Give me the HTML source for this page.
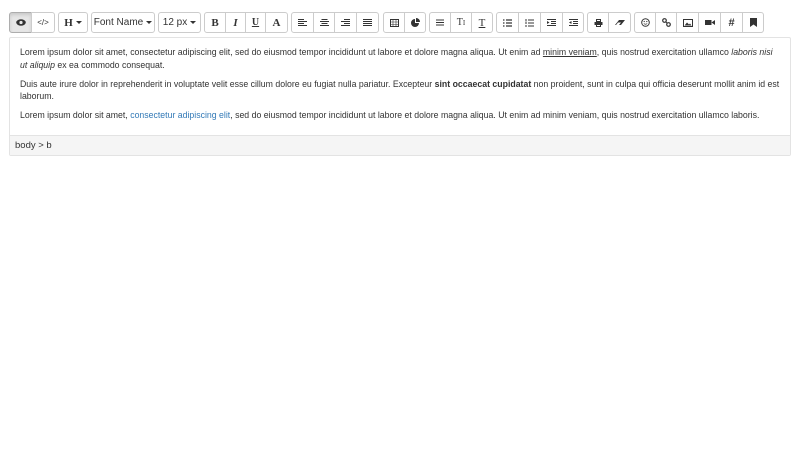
<!DOCTYPE html>
<html><head><meta charset="utf-8"><style>
*{box-sizing:border-box;margin:0;padding:0}
body{width:800px;height:450px;background:#fff;font-family:"Liberation Sans",sans-serif;color:#333;position:relative;overflow:hidden}
.b{position:absolute;top:12px;height:21px;border:1px solid #ccc;background:#fff;display:flex;align-items:center;justify-content:center;font-size:10px;color:#333}
.act{background:#e6e6e6;border-color:#adadad;box-shadow:inset 0 2px 3px rgba(0,0,0,.125)}
.car{display:inline-block;border-top:3px solid #333;border-left:3px solid transparent;border-right:3px solid transparent;margin-left:3px;vertical-align:middle}
svg{display:block}
.ed{position:absolute;left:9px;top:37px;width:782px;height:119px;border:1px solid #e3e3e3;border-radius:2px}
.txt{padding:8px 10px 0 10px;font-size:8.74px;line-height:12.8px}
.txt p{margin-bottom:6px}
.st{position:absolute;left:0;right:0;bottom:0;height:20px;background:#f5f5f5;border-top:1px solid #e3e3e3;font-size:9.5px;padding:4px 5px}
a{color:#337ab7;text-decoration:none}
</style></head><body>
<div class="b act" style="left:9px;width:23px;border-radius:3px 0 0 3px"><svg width="10" height="7" viewBox="0 0 10 7"><ellipse cx="5" cy="3.5" rx="4.8" ry="3.2" fill="#333"/><circle cx="5" cy="3.5" r="1.6" fill="#e6e6e6"/></svg></div>
<div class="b" style="left:31px;width:24px;border-radius:0 3px 3px 0;font-size:8px">&lt;/&gt;</div>
<div class="b" style="left:58px;width:30px;border-radius:3px;font-family:'Liberation Serif';font-weight:bold;font-size:11px">H<span class="car"></span></div>
<div class="b" style="left:91px;width:64px;border-radius:3px">Font Name<span class="car"></span></div>
<div class="b" style="left:158px;width:43px;border-radius:3px">12 px<span class="car"></span></div>
<div class="b" style="left:204px;width:22px;border-radius:3px 0 0 3px;font-family:'Liberation Serif';font-weight:bold;font-size:11px">B</div>
<div class="b" style="left:225px;width:21px;font-family:'Liberation Serif';font-style:italic;font-weight:bold;font-size:11px">I</div>
<div class="b" style="left:245px;width:21px;font-family:'Liberation Serif';text-decoration:underline;font-weight:bold;font-size:10px">U</div>
<div class="b" style="left:265px;width:23px;border-radius:0 3px 3px 0;font-family:'Liberation Serif';font-weight:bold;font-size:11px">A</div>
<div class="b" style="left:291px;width:23px;border-radius:3px 0 0 3px"><svg width="9" height="8"><path d="M0 .5h6M0 2.5h9M0 4.5h6M0 6.5h9" stroke="#333"/></svg></div>
<div class="b" style="left:313px;width:22px"><svg width="9" height="8"><path d="M1.5 .5h6M0 2.5h9M1.5 4.5h6M0 6.5h9" stroke="#333"/></svg></div>
<div class="b" style="left:334px;width:23px"><svg width="9" height="8"><path d="M3 .5h6M0 2.5h9M3 4.5h6M0 6.5h9" stroke="#333"/></svg></div>
<div class="b" style="left:356px;width:23px;border-radius:0 3px 3px 0"><svg width="9" height="8"><path d="M0 .5h9M0 2.5h9M0 4.5h9M0 6.5h9" stroke="#333"/></svg></div>
<div class="b" style="left:383px;width:22px;border-radius:3px 0 0 3px"><svg width="9" height="8"><rect x=".5" y=".5" width="8" height="7" fill="none" stroke="#333"/><path d="M0 3h9M0 5.5h9M3 0v8M6 0v8" stroke="#333" stroke-width=".6"/></svg></div>
<div class="b" style="left:404px;width:22px;border-radius:0 3px 3px 0"><svg width="9" height="9"><path d="M4 1A4 4 0 1 0 8 5H4Z" fill="#333"/><path d="M5 0A4 4 0 0 1 9 4H5Z" fill="#333"/></svg></div>
<div class="b" style="left:429px;width:22px;border-radius:3px 0 0 3px"><svg width="8" height="7"><path d="M0 1h8M0 3.5h8M0 6h8" stroke="#333"/></svg></div>
<div class="b" style="left:450px;width:22px;font-family:'Liberation Serif';font-size:10px">T<span style="font-size:7px">I</span></div>
<div class="b" style="left:471px;width:22px;border-radius:0 3px 3px 0;font-family:'Liberation Serif';font-size:11px;text-decoration:underline">T</div>
<div class="b" style="left:496px;width:23px;border-radius:3px 0 0 3px"><svg width="9" height="8"><path d="M0 1h1.5M3 1h6M0 4h1.5M3 4h6M0 7h1.5M3 7h6" stroke="#333" stroke-width="1.3"/></svg></div>
<div class="b" style="left:518px;width:23px"><svg width="9" height="8"><path d="M1 0v2.5M1 3v2M0 7h2M3 1h6M3 4h6M3 7h6" stroke="#333"/></svg></div>
<div class="b" style="left:540px;width:23px"><svg width="9" height="8"><path d="M0 .5h9M4 2.5h5M4 4.5h5M0 6.5h9" stroke="#333"/><path d="M0 2l2.5 1.5L0 5z" fill="#333"/></svg></div>
<div class="b" style="left:562px;width:22px;border-radius:0 3px 3px 0"><svg width="9" height="8"><path d="M0 .5h9M4 2.5h5M4 4.5h5M0 6.5h9" stroke="#333"/><path d="M2.5 2L0 3.5 2.5 5z" fill="#333"/></svg></div>
<div class="b" style="left:587px;width:22px;border-radius:3px 0 0 3px"><svg width="9" height="8"><rect x="2.5" y=".5" width="4" height="2" fill="none" stroke="#333"/><rect x=".5" y="3" width="8" height="3" fill="#333"/><rect x="2.5" y="5.5" width="4" height="2" fill="#fff" stroke="#333"/></svg></div>
<div class="b" style="left:608px;width:23px;border-radius:0 3px 3px 0"><svg width="10" height="7"><path d="M0 6L4 1h6L6 6z" fill="#333"/><path d="M1 6l2-2.5h3L4 6z" fill="#fff"/></svg></div>
<div class="b" style="left:634px;width:22px;border-radius:3px 0 0 3px"><svg width="9" height="9"><circle cx="4.5" cy="4.5" r="3.8" fill="none" stroke="#333"/><circle cx="3.2" cy="3.5" r=".6" fill="#333"/><circle cx="5.8" cy="3.5" r=".6" fill="#333"/><path d="M2.8 5.5q1.7 1.5 3.4 0" fill="none" stroke="#333" stroke-width=".8"/></svg></div>
<div class="b" style="left:655px;width:22px"><svg width="9" height="9"><circle cx="2.5" cy="2.5" r="1.8" fill="none" stroke="#333" stroke-width="1.2"/><circle cx="6.5" cy="6.5" r="1.8" fill="none" stroke="#333" stroke-width="1.2"/><path d="M3.5 3.5l2 2" stroke="#333"/></svg></div>
<div class="b" style="left:676px;width:23px"><svg width="10" height="8"><rect x=".5" y=".5" width="9" height="7" fill="none" stroke="#333"/><path d="M1.5 6.5l2.5-3 2 2 1-1 1.5 2z" fill="#333"/></svg></div>
<div class="b" style="left:698px;width:23px"><svg width="10" height="7"><rect x="0" y="1" width="6.5" height="5" fill="#333"/><path d="M6.5 3.5L10 1v5z" fill="#333"/></svg></div>
<div class="b" style="left:720px;width:23px;font-weight:bold;font-size:11px">#</div>
<div class="b" style="left:742px;width:22px;border-radius:0 3px 3px 0"><svg width="7" height="9"><path d="M0 0h7v9L3.5 6.5 0 9z" fill="#333"/></svg></div>
<div class="ed"><div class="txt">
<p>Lorem ipsum dolor sit amet, consectetur adipiscing elit, sed do eiusmod tempor incididunt ut labore et dolore magna aliqua. Ut enim ad <u>minim veniam</u>, quis nostrud exercitation ullamco <i>laboris nisi ut aliquip</i> ex ea commodo consequat.</p>
<p>Duis aute irure dolor in reprehenderit in voluptate velit esse cillum dolore eu fugiat nulla pariatur. Excepteur <b>sint occaecat cupidatat</b> non proident, sunt in culpa qui officia deserunt mollit anim id est laborum.</p>
<p>Lorem ipsum dolor sit amet, <a>consectetur adipiscing elit</a>, sed do eiusmod tempor incididunt ut labore et dolore magna aliqua. Ut enim ad minim veniam, quis nostrud exercitation ullamco laboris.</p>
</div><div class="st">body &gt; b</div></div>
</body></html>
